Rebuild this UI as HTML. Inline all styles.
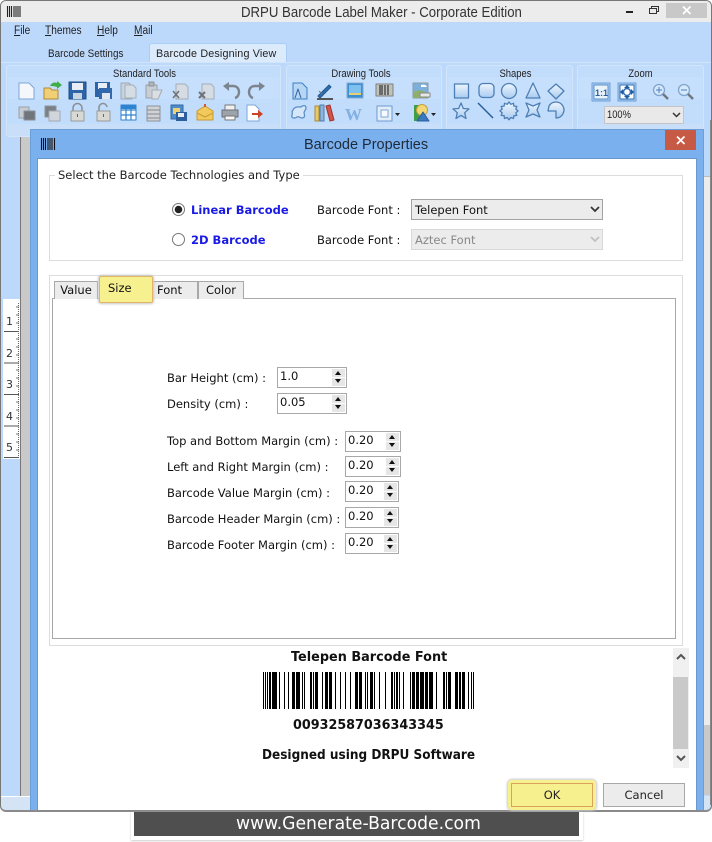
<!DOCTYPE html>
<html><head><meta charset="utf-8"><style>
html,body{margin:0;padding:0;background:#fff}
#p{position:relative;width:712px;height:842px;overflow:hidden;background:#fff;font-family:"DejaVu Sans",sans-serif;font-size:11.5px;color:#111}
#p div,#p span.a{position:absolute;box-sizing:border-box}
.t{position:absolute;white-space:nowrap;line-height:14px}
.m{font-family:"Liberation Sans",sans-serif;font-size:11.5px;color:#222;transform-origin:left;transform:scaleX(.88)}
.m u{text-decoration:underline}
.g{top:65px;height:72px;background:#c2dcfb;border:1px solid #d3e5fb;border-radius:3px}
.gt{position:absolute;text-align:center;font-family:"Liberation Sans",sans-serif;font-size:11px;color:#222;top:68px;line-height:13px;transform:scaleX(.86)}
.sp{height:21px;border:1px solid #a8a8a8;background:#fff}
.sp i{position:absolute;right:1px;top:1px;width:13px;height:17px;background:#e6e6e6}
.sp i:before{content:"";position:absolute;left:3px;top:2px;border:3.500px solid transparent;border-top:0;border-bottom:4px solid #111}
.sp i:after{content:"";position:absolute;left:3px;top:10px;border:3.500px solid transparent;border-bottom:0;border-top:4px solid #111}
.sp b{position:absolute;right:1px;top:9px;width:13px;height:1px;background:#fff;z-index:2}
.sp span{position:absolute;left:2px;top:1px;line-height:14px;font-size:11.5px;font-weight:normal}
.tab{top:281px;height:18px;background:#ececec;border:1px solid #a8a8a8;border-bottom:0;text-align:center;line-height:17px}
.r{position:absolute;left:6px;font-size:11px;line-height:14px;color:#333;font-family:"DejaVu Sans",sans-serif}
</style></head><body><div id="p">
<!-- window -->
<div style="left:0;top:0;width:712px;height:812px;background:#bcd9fc;border:1px solid #777;border-bottom:2px solid #8a8a8a;border-radius:6px"></div>
<div style="left:1px;top:1px;width:710px;height:21px;background:#ececec;border-radius:5px 5px 0 0"></div>
<svg style="position:absolute;left:6px;top:6px" width="16" height="12"><path d="M1.500 0v11M3.500 0v11M5.500 0v11M8 0v11M10 0v11M12 0v11M14 0v11" stroke="#222" stroke-width="1.100"/></svg>
<span class="t" style="left:241px;top:5px;font-family:'Liberation Sans',sans-serif;font-size:14.500px;line-height:16px;color:#333;transform-origin:left;transform:scaleX(.91)">DRPU Barcode Label Maker - Corporate Edition</span>
<div style="left:626px;top:11px;width:7px;height:2px;background:#222"></div>
<div style="left:649px;top:8px;width:8px;height:6px;border:1px solid #333;background:#ececec;box-shadow:2px -2px 0 -1px #ececec,2px -2px 0 0 #333"></div>
<div style="left:666px;top:3px;width:41px;height:15px;background:#c8c8c8"></div>
<svg style="position:absolute;left:682px;top:6px" width="10" height="9"><path d="M1 .5l7.500 7.500M8.500 .5L1 8" stroke="#fff" stroke-width="1.700"/></svg>
<span class="t m" style="left:14px;top:24px"><u>F</u>ile</span>
<span class="t m" style="left:45px;top:24px"><u>T</u>hemes</span>
<span class="t m" style="left:97px;top:24px"><u>H</u>elp</span>
<span class="t m" style="left:134px;top:24px"><u>M</u>ail</span>
<span class="t m" style="left:48px;top:47px;font-size:11px;transform:scaleX(.9)">Barcode Settings</span>
<div style="left:149px;top:43px;width:138px;height:20px;background:#dcebfc;border:1px solid #a9cdf6;border-bottom:0;border-radius:3px 3px 0 0"></div>
<span class="t m" style="left:156px;top:47px;font-size:11px;letter-spacing:.15px;transform:scaleX(.98)">Barcode Designing View</span>
<div style="left:1px;top:62px;width:710px;height:1px;background:#d3e5fb"></div>
<!-- groups -->
<div class="g" style="left:6px;width:275px"></div>
<div class="g" style="left:286px;width:156px"></div>
<div class="g" style="left:446px;width:127px"></div>
<div class="g" style="left:577px;width:127px"></div>
<div style="left:8px;top:77px;width:271px;height:22px;background:#c6dffc"></div>
<div style="left:288px;top:77px;width:152px;height:22px;background:#c6dffc"></div>
<div style="left:448px;top:77px;width:123px;height:22px;background:#c6dffc"></div>
<div style="left:579px;top:77px;width:123px;height:22px;background:#c6dffc"></div>
<div style="left:8px;top:124px;width:271px;height:12px;background:#c9def8"></div>
<div style="left:288px;top:124px;width:152px;height:12px;background:#c9def8"></div>
<div style="left:448px;top:124px;width:123px;height:12px;background:#c9def8"></div>
<div style="left:579px;top:124px;width:123px;height:12px;background:#c9def8"></div>
<span class="gt" style="left:6px;width:277px">Standard Tools</span>
<span class="gt" style="left:286px;width:150px">Drawing Tools</span>
<span class="gt" style="left:446px;width:139px">Shapes</span>
<span class="gt" style="left:577px;width:127px">Zoom</span>
<!-- icons -->
<svg style="position:absolute;left:0;top:0" width="712" height="140" viewBox="0 0 712 140" fill="none" stroke-linejoin="round">
<!-- row 1 standard -->
<path d="M19 83h10l5 5v11H19z" fill="#f4f8fd" stroke="#7fa6d6"/>
<path d="M44 88h6l2 2h6v9H44z" fill="#f1cf76" stroke="#b08a33"/><path d="M50 86c2-4 5-4 7-3v-2l5 4-5 4v-2c-3-1-5-1-7-1z" fill="#3fae49"/>
<path d="M69 82h17v17H69z" fill="#2d63a8" stroke="#1f4c85"/><path d="M72 83h11v7H72z" fill="#e8eef6"/><path d="M73 93h9v6h-9z" fill="#c9d4e2"/>
<path d="M95 82h15v15H95z" fill="#2d63a8"/><path d="M98 83h9v6h-9z" fill="#e8eef6"/><path d="M99 88h13v11H99z" fill="#3269ad"/><path d="M102 93h8v6h-8z" fill="#dfe6ef"/>
<path d="M121 83h8l3 3v13h-11z" fill="#c8d2dc" stroke="#9eaab4"/><path d="M125 85h8l3 3v10h-11z" fill="#d4dce4" stroke="#a6b0ba"/>
<path d="M146 85h11v13h-11z" fill="#c8ced4" stroke="#9a9fa6"/><path d="M149 82h5v4h-5z" fill="#b0b6bc" stroke="#8e9399"/><path d="M152 90h10l-4 9h-6z" fill="#d9dfe5" stroke="#a6acb2"/>
<path d="M176 84h9l3 3v12h-12z" fill="#d5dce3" stroke="#a5adb5"/><path d="M173 91l6 7M179 91l-6 7" stroke="#6e7277" stroke-width="1.500"/>
<path d="M202 84h9l3 3v12h-12z" fill="#d5dce3" stroke="#a5adb5"/><path d="M199 92l6 6M205 92l-6 6" stroke="#6e7277" stroke-width="2"/>
<path d="M226 86h7c5 0 6 4 6 6 0 2-1 5-4 6" stroke="#7c858e" stroke-width="2.500"/><path d="M229 82l-6 4 6 5z" fill="#7c858e"/>
<path d="M262 86h-7c-5 0-6 4-6 6 0 2 1 5 4 6" stroke="#7c858e" stroke-width="2.500"/><path d="M259 82l6 4-6 5z" fill="#7c858e"/>
<!-- row 2 standard -->
<path d="M19 107h10v11H19z" fill="#c5ccd3" stroke="#9aa1a8"/><path d="M24 111h11v9H24z" fill="#6f757b" stroke="#8a9096"/>
<path d="M45 106h11v11H45z" fill="#7a8086" stroke="#8f959b"/><path d="M49 111h11v10H49z" fill="#d0d6dc" stroke="#a2a8ae"/>
<path d="M73 111v-3a4.500 4.500 0 0 1 9 0v3" stroke="#8a8f94" stroke-width="1.500"/><path d="M71 111h13v10H71z" fill="#d8d8d4" stroke="#9a9a96"/><path d="M77.500 114v3" stroke="#666"/>
<path d="M99 111v-3a4 4 0 0 1 8-1" stroke="#8a8f94" stroke-width="1.500"/><path d="M97 111h13v10H97z" fill="#d8d8d4" stroke="#9a9a96"/><path d="M103.500 114v3" stroke="#666"/>
<path d="M121 105h15v15h-15z" fill="#fff" stroke="#2d83cf"/><path d="M121 105h15v4h-15z" fill="#2d83cf"/><path d="M126 105v15M131 105v15M121 110h15M121 115h15" stroke="#2d83cf" stroke-width="1.200"/>
<path d="M147 106h13v15h-13z" fill="#cfd3d7" stroke="#8e9398"/><path d="M147 110h13M147 114h13M147 118h13" stroke="#858a8f"/>
<path d="M171 105h12v14h-12z" fill="#4d8cc9" stroke="#2f6aa6"/><path d="M173 108h7v6h-7z" fill="#f0d070"/><path d="M176 112h11v9h-11z" fill="#2d5f9e"/><path d="M178 113h6v4h-6z" fill="#e6eef6"/>
<path d="M197 111l8-5 8 5v9h-16z" fill="#f2c95c" stroke="#c89b33"/><path d="M197 113l8 4 8-4" stroke="#c89b33"/><path d="M205 104v3" stroke="#d05a3a" stroke-width="2"/>
<path d="M225 105h10v5h-10z" fill="#f0f0f0" stroke="#777"/><path d="M222 110h16v7h-16z" fill="#9da3a9" stroke="#6a7076"/><path d="M225 116h10v4h-10z" fill="#f6f6f6" stroke="#777"/>
<path d="M247 105h8l4 4v12h-12z" fill="#fff" stroke="#7fa6d6"/><path d="M252 114h7" stroke="#cc4422" stroke-width="2"/><path d="M258 110l5 4-5 4z" fill="#cc4422"/>
<!-- drawing -->
<path d="M293 83h9l5 5v11h-14z" fill="#b6d6f4" stroke="#3b7fc4"/><path d="M295 98l3-9 3 9" stroke="#2d62a3"/>
<path d="M318 96l11-11 2 2-11 11z" fill="#2f6fb0" stroke="#24568a"/><path d="M317 99h16" stroke="#555" stroke-width="2"/><path d="M319 91l3 3" stroke="#777"/>
<path d="M347 83h16v15h-16z" fill="#3a8fd4" stroke="#86a8cc"/><path d="M349 85h12v9h-12z" fill="#7ec1ee"/><path d="M349 94h12" stroke="#e9cf72" stroke-width="2"/>
<path d="M376 84h17v12h-17z" fill="#c0c0bc" stroke="#80807c"/><path d="M380 85v10M382 85v10M385 85v10M388 85v10" stroke="#333" stroke-width="1.200"/>
<path d="M413 83h15v15h-15z" fill="#7cb0d8" stroke="#8a9aa8"/><path d="M421 85a4 3 0 0 1 6 2l-6 0z" fill="#fff"/><path d="M413 92l7-2 8 3v5h-15z" fill="#8fb06a"/><path d="M420 93h10v4h-10z" fill="#e8e8e8" stroke="#888"/>
<path d="M293 110c2-4 6-3 8-3 2-2 5-2 5 1 0 2-2 3-2 5 1 2 1 5-2 5-2 0-3-2-5-1-3 2-6 1-5-2 1-2-1-3 1-5z" fill="#d6e7fb" stroke="#5b8fc6" stroke-width="1.300"/>
<path d="M315 106h4v15h-4z" fill="#e8c968" stroke="#a98a38"/><path d="M320 105h4v16h-4z" fill="#8fb4dc" stroke="#4d7cae"/><path d="M326 106l4-1 4 15-4 1z" fill="#d2544a" stroke="#9c362e"/>
<text x="345" y="120" font-family="Liberation Serif,serif" font-size="17" font-weight="bold" fill="#82b0e2">W</text>
<path d="M377 106h15v15h-15z" fill="#e2edfa" stroke="#6d9ad0"/><path d="M381 110h7v7h-7z" fill="#f6f9fd" stroke="#7da7d8"/><path d="M395 113h5l-2.500 3z" fill="#222"/>
<path d="M414 105h6v16h-6z" fill="#3f9e4a"/><circle cx="422" cy="110" r="5.500" fill="#f2d774" stroke="#c2a13c"/><path d="M417 121l6-9 6 9z" fill="#3a78c0" stroke="#2c5f9c"/><path d="M431 113h5l-2.500 3z" fill="#222"/>
<!-- shapes -->
<g stroke="#4c7fb5" stroke-width="1.300" fill="#bcd8f7">
<path d="M454.500 84h14v14h-14z" fill="url(#sh)"/>
<rect x="479" y="83.500" width="15" height="14" rx="4" fill="url(#sh)"/>
<circle cx="509" cy="91" r="7.500" fill="url(#sh)"/>
<path d="M533 83l7 15h-14z" fill="url(#sh)"/>
<path d="M556 84l8 7-8 8-8-8z" fill="url(#sh)"/>
<path d="M461 103l2.300 5.500 5.700.4-4.300 3.800 1.300 5.800-5-3.100-5 3.100 1.300-5.800-4.300-3.800 5.700-.4z" fill="url(#sh)"/>
<path d="M478 103l15 15" stroke="#2a5f9c" stroke-width="1.500"/>
<path d="M509 102l1.800 2.300 2.700-1 .4 2.800 2.900.3-1 2.700 2.300 1.800-2.300 1.800 1 2.700-2.900.3-.4 2.800-2.700-1-1.800 2.300-1.800-2.300-2.700 1-.4-2.800-2.900-.3 1-2.700-2.300-1.800 2.300-1.800-1-2.700 2.900-.3.400-2.800 2.700 1z" fill="url(#sh)"/>
<path d="M526 103l7 3 7-3-3 7 3 7-7-3-7 3 3-7z" fill="url(#sh)"/>
<path d="M549 106a8 8 0 1 1 7 12v-7h-8z" fill="url(#sh)"/>
</g>
<defs><linearGradient id="sh" x1="0" y1="0" x2="0" y2="1"><stop offset="0" stop-color="#eef5fd"/><stop offset="1" stop-color="#a9cbf0"/></linearGradient></defs>
<!-- zoom -->
<path d="M592 83h18v18h-18z" fill="#a8ccf2" stroke="#6ea0d6"/><path d="M594 85h14v14h-14z" fill="#eaf3fc" stroke="#5a90c8"/>
<text x="595" y="96" font-family="Liberation Sans,sans-serif" font-size="9" font-weight="bold" fill="#2d5f9e">1:1</text>
<path d="M618 83h18v18h-18z" fill="#a8ccf2" stroke="#6ea0d6"/><path d="M620 85h14v14h-14z" fill="#fff" stroke="#2d6bb0"/>
<path d="M627 85l3 3h-6zM627 99l3-3h-6zM620 92l3-3v6zM634 92l-3-3v6z" fill="#1f5a9e"/><circle cx="627" cy="92" r="3.500" stroke="#2d6bb0" stroke-width="1.500"/>
<circle cx="659" cy="90" r="5.500" fill="#d6e8fb" stroke="#7fa6cf" stroke-width="1.300"/><path d="M663 94l5 5" stroke="#6f7880" stroke-width="2.500"/><path d="M656 90h6M659 87v6" stroke="#4d80b8"/>
<circle cx="684" cy="90" r="5.500" fill="#d6e8fb" stroke="#7fa6cf" stroke-width="1.300"/><path d="M688 94l5 5" stroke="#6f7880" stroke-width="2.500"/><path d="M681 90h6" stroke="#4d80b8"/>
</svg>
<div style="left:604px;top:106px;width:80px;height:18px;background:#e9e9e9;border:1px solid #c4c4c4"></div>
<span class="t" style="left:607px;top:108px;font-family:'Liberation Sans',sans-serif;font-size:11px;color:#222;transform-origin:left;transform:scaleX(.85)">100%</span>
<svg style="position:absolute;left:672px;top:112px" width="9" height="6" fill="none"><path d="M1 1l3.500 3.500L8 1" stroke="#333" stroke-width="1.500"/></svg>
<!-- left side -->
<div style="left:20px;top:137px;width:10px;height:659px;background:#c9c9c9;border-left:1px solid #777"></div>
<div style="left:1px;top:796px;width:29px;height:14px;background:#d5e4f4;border-top:1px solid #fff;border-radius:0 0 0 5px"></div>
<div style="left:3px;top:299px;width:17px;height:160px;background:#fff"></div>
<svg style="position:absolute;left:3px;top:299px" width="18" height="160" fill="none" stroke="#555">
<path d="M1 32.500h15M1 64h15M1 95.500h15M1 127h15M1 158.500h15" stroke-width="1"/>
<path stroke-width="1" stroke-dasharray="1 1" d="M15.500 4v154" stroke="#666"/><path d="M13 8h3M13 16h3M13 24h3M13 40h3M13 48h3M13 56h3M13 71h3M13 79h3M13 87h3M13 103h3M13 111h3M13 119h3M13 135h3M13 143h3M13 151h3" stroke="#777"/>
</svg>
<span class="r" style="top:315px">1</span>
<span class="r" style="top:347px">2</span>
<span class="r" style="top:378px">3</span>
<span class="r" style="top:410px">4</span>
<span class="r" style="top:441px">5</span>
<!-- right side -->
<div style="left:703px;top:176px;width:7px;height:549px;background:#ececec;border-top:1px solid #bbb"></div>
<div style="left:703px;top:725px;width:7px;height:70px;background:#c9c9c9"></div>
<div style="left:703px;top:796px;width:7px;height:14px;background:#d5e4f4;border-radius:0 0 5px 0"></div>
<div style="left:710px;top:120px;width:1px;height:685px;background:#888"></div>
<!-- dialog -->
<div style="left:30px;top:129px;width:674px;height:681px;background:#7bb0ef;border:1px solid #6a9fda;border-bottom:0"></div>
<div style="left:38px;top:159px;width:658px;height:651px;background:#fff;outline:1px solid #6a97cc"></div>
<div style="left:30px;top:810px;width:674px;height:2px;background:#8a8a8a"></div>
<svg style="position:absolute;left:40px;top:138px" width="16" height="12"><path d="M1.500 0v12M3.500 0v12M5.500 0v12M8 0v12M10 0v12M12 0v12M14.500 0v12" stroke="#111" stroke-width="1.100"/></svg>
<span class="t" style="left:304px;top:137px;font-family:'Liberation Sans',sans-serif;font-size:14.500px;line-height:17px;color:#1e2a38">Barcode Properties</span>
<div style="left:665px;top:130px;width:31px;height:20px;background:#c75a45"></div>
<svg style="position:absolute;left:676px;top:136px" width="10" height="9"><path d="M1 .5l7.500 7.500M8.500 .5L1 8" stroke="#fff" stroke-width="1.700"/></svg>
<!-- group box -->
<div style="left:49px;top:175px;width:634px;height:86px;border:1px solid #dcdcdc"></div>
<span class="t" style="left:55px;top:168px;background:#fff;padding:0 3px;color:#222">Select the Barcode Technologies and Type</span>
<svg style="position:absolute;left:171px;top:202px" width="16" height="46" fill="none"><circle cx="7.500" cy="7.500" r="6" fill="#fff" stroke="#777"/><circle cx="7.500" cy="7.500" r="3.800" fill="#222"/><circle cx="7.500" cy="37.500" r="6" fill="#fff" stroke="#777"/></svg>
<span class="t" style="left:191px;top:203px;font-weight:bold;color:#1a1ae6">Linear Barcode</span>
<span class="t" style="left:191px;top:233px;font-weight:bold;color:#1a1ae6">2D Barcode</span>
<span class="t" style="left:317px;top:203px">Barcode Font :</span>
<span class="t" style="left:317px;top:233px">Barcode Font :</span>
<div style="left:411px;top:199px;width:192px;height:21px;background:#ececec;border:1px solid #a3a3a3"></div>
<span class="t" style="left:415px;top:203px">Telepen Font</span>
<svg style="position:absolute;left:590px;top:206px" width="10" height="7" fill="none"><path d="M1 1l4 4 4-4" stroke="#333" stroke-width="1.700"/></svg>
<div style="left:411px;top:229px;width:192px;height:21px;background:#ececec;border:1px solid #d8d8d8"></div>
<span class="t" style="left:415px;top:233px;color:#888">Aztec Font</span>
<svg style="position:absolute;left:590px;top:236px" width="10" height="7" fill="none"><path d="M1 1l4 4 4-4" stroke="#c0c0c0" stroke-width="1.700"/></svg>
<!-- tab frame -->
<div style="left:49px;top:275px;width:634px;height:371px;border:1px solid #dcdcdc"></div>
<div style="left:52px;top:298px;width:624px;height:341px;background:#fff;border:1px solid #a8a8a8"></div>
<div class="tab" style="left:54px;width:44px">Value</div>
<div class="tab" style="left:150px;width:48px;text-align:left;padding-left:6px">Font</div>
<div class="tab" style="left:198px;width:46px">Color</div>
<div style="left:99px;top:276px;width:54px;height:27px;background:#f7f08f;border:1px solid #e0b565;border-radius:2px;box-shadow:0 0 2px 1px #c8c8c8"></div>
<span class="t" style="left:108px;top:281px">Size</span>
<!-- form -->
<span class="t" style="left:167px;top:371px">Bar Height (cm) :</span>
<span class="t" style="left:167px;top:397px">Density (cm) :</span>
<span class="t" style="left:167px;top:434px">Top and Bottom Margin (cm) :</span>
<span class="t" style="left:167px;top:460px">Left and Right Margin (cm) :</span>
<span class="t" style="left:167px;top:486px">Barcode Value Margin (cm) :</span>
<span class="t" style="left:167px;top:512px">Barcode Header Margin (cm) :</span>
<span class="t" style="left:167px;top:538px">Barcode Footer Margin (cm) :</span>
<div class="sp" style="left:277px;top:367px;width:70px"><span>1.0</span><i></i><b></b></div>
<div class="sp" style="left:277px;top:393px;width:70px"><span>0.05</span><i></i><b></b></div>
<div class="sp" style="left:345px;top:431px;width:56px"><span>0.20</span><i></i><b></b></div>
<div class="sp" style="left:345px;top:456px;width:56px"><span>0.20</span><i></i><b></b></div>
<div class="sp" style="left:345px;top:481px;width:54px"><span>0.20</span><i></i><b></b></div>
<div class="sp" style="left:345px;top:507px;width:54px"><span>0.20</span><i></i><b></b></div>
<div class="sp" style="left:345px;top:533px;width:54px"><span>0.20</span><i></i><b></b></div>
<!-- barcode preview -->
<span class="t" style="left:291px;top:650px;font-weight:bold;font-size:13px;line-height:16px;color:#111;transform-origin:left;transform:scaleX(.987)">Telepen Barcode Font</span>
<svg style="position:absolute;left:263px;top:672px" width="212" height="37"><line x1="0" y1="18.500" x2="211" y2="18.500" stroke="#000" stroke-width="37" stroke-dasharray="1 1 1 1 1 1 2 1 5 2 1 4 1 3 1 3 3 1 4 2 1 1 1 5 2 1 1 1 3 4 1 2 3 1 3 3 1 4 1 4 1 4 1 4 3 1 3 3 1 1 1 2 3 1 1 4 1 5 1 5 2 1 1 1 2 1 1 3 1 6 1 1 3 1 3 1 4 1 3 1 4 3 1 6 2 1 1 1 3 4 3 1 2 1 3 3 1 2 1 1 1 99"/></svg>
<span class="t" style="left:293px;top:718px;font-weight:bold;font-size:13px;line-height:16px;color:#111;transform-origin:left;transform:scaleX(.98)">00932587036343345</span>
<span class="t" style="left:262px;top:748px;font-weight:bold;font-size:13px;line-height:16px;color:#111;transform-origin:left;transform:scaleX(.93)">Designed using DRPU Software</span>
<!-- preview scrollbar -->
<div style="left:673px;top:648px;width:16px;height:120px;background:#f0f0f0"></div>
<div style="left:673px;top:677px;width:15px;height:72px;background:#c9c9c9"></div>
<svg style="position:absolute;left:675px;top:652px" width="12" height="112" fill="none"><path d="M2 7l4-4 4 4" stroke="#555" stroke-width="2"/><path d="M2 104l4 4 4-4" stroke="#555" stroke-width="2"/></svg>
<!-- buttons -->
<div style="left:508px;top:780px;width:88px;height:30px;background:#f7f08f;border-radius:4px;box-shadow:0 0 2px 1px #c8c8c8"></div>
<div style="left:511px;top:783px;width:82px;height:24px;border:1px solid #d9a25a;text-align:center;line-height:22px;font-size:11.500px;color:#222">OK</div>
<div style="left:603px;top:783px;width:82px;height:24px;background:#ececec;border:1px solid #a8a8a8;text-align:center;line-height:22px;font-size:11.500px;color:#222">Cancel</div>
<!-- banner -->
<div style="left:131px;top:812px;width:452px;height:28px;background:#fff;box-shadow:0 1px 2px #ccc"></div>
<div style="left:134px;top:812px;width:445px;height:24px;background:#4f4f4f"></div>
<span class="t" style="left:236px;top:813px;font-size:18px;line-height:21px;color:#fff;font-family:'DejaVu Sans',sans-serif;transform-origin:left;transform:scaleX(.956)">www.Generate-Barcode.com</span>
</div></body></html>
